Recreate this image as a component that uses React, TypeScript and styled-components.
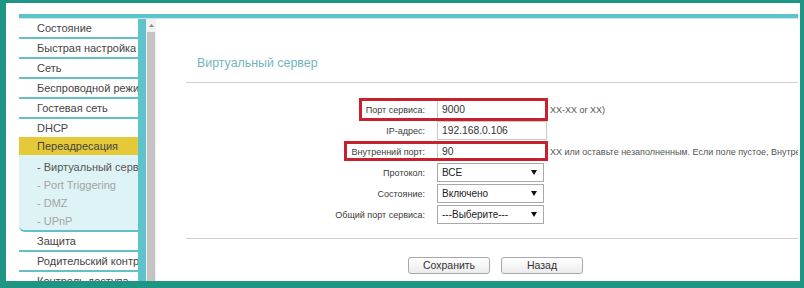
import React from 'react'
import styled, { createGlobalStyle } from 'styled-components'

const GlobalStyle = createGlobalStyle`
  html, body {
    margin: 0;
    padding: 0;
    background: #1f9584;
  }
  body {
    font-family: "Liberation Sans", Arial, sans-serif;
  }
`

type MenuEntry = { label: string; flat?: boolean; active?: boolean }

const topMenu: MenuEntry[] = [
  { label: 'Состояние' },
  { label: 'Быстрая настройка' },
  { label: 'Сеть' },
  { label: 'Беспроводной режим' },
  { label: 'Гостевая сеть' },
  { label: 'DHCP', flat: true },
]

const subMenu = [
  { label: '- Виртуальный сервер', current: true },
  { label: '- Port Triggering' },
  { label: '- DMZ' },
  { label: '- UPnP' },
]

const bottomMenu: MenuEntry[] = [
  { label: 'Защита' },
  { label: 'Родительский контроль' },
  { label: 'Контроль доступа' },
]

const Arrow = () => (
  <svg width="6" height="5" viewBox="0 0 6 5">
    <path d="M0 0h6L3 5z" fill="#111" />
  </svg>
)

export default function App() {
  return (
    <>
      <GlobalStyle />
      <Frame>
        <Window>
          <TopBar />
          <Body>
            <Menu>
              {topMenu.map((m) => (
                <MenuItem key={m.label} $flat={m.flat}>
                  {m.label}
                </MenuItem>
              ))}
              <MenuItem $active $flat>
                Переадресация
              </MenuItem>
              <SubMenu>
                {subMenu.map((s) => (
                  <SubItem key={s.label} $current={s.current}>
                    {s.label}
                  </SubItem>
                ))}
              </SubMenu>
              {bottomMenu.map((m) => (
                <MenuItem key={m.label}>{m.label}</MenuItem>
              ))}
            </Menu>
            <Divider />
            <ScrollBar>
              <ScrollArrow>
                <svg width="5" height="3" viewBox="0 0 5 3">
                  <path d="M0 3h5L2.5 0z" fill="#8a8a8a" />
                </svg>
              </ScrollArrow>
              <ScrollThumb />
            </ScrollBar>
            <Content>
              <Header>
                <Title>Виртуальный сервер</Title>
              </Header>
              <Form>
                <Row>
                  <Label>Порт сервиса:</Label>
                  <Input>9000</Input>
                  <Hint>XX-XX or XX)</Hint>
                  <Mark $left={203} $top={-1} $width={189} $height={23} />
                </Row>
                <Row>
                  <Label>IP-адрес:</Label>
                  <Input>192.168.0.106</Input>
                </Row>
                <Row>
                  <Label>Внутренний порт:</Label>
                  <Input>90</Input>
                  <Hint>XX или оставьте незаполненным. Если поле пустое, Внутренний порт будет таким же, как порт сервиса</Hint>
                  <Mark $left={188} $top={0} $width={204} $height={20} />
                </Row>
                <Row>
                  <Label>Протокол:</Label>
                  <Select>
                    ВСЕ
                    <Arrow />
                  </Select>
                </Row>
                <Row>
                  <Label>Состояние:</Label>
                  <Select>
                    Включено
                    <Arrow />
                  </Select>
                </Row>
                <Row>
                  <Label>Общий порт сервиса:</Label>
                  <Select>
                    ---Выберите---
                    <Arrow />
                  </Select>
                </Row>
              </Form>
              <Footer>
                <Button>Сохранить</Button>
                <Button>Назад</Button>
              </Footer>
            </Content>
          </Body>
        </Window>
      </Frame>
    </>
  )
}

const Frame = styled.div`
  width: 804px;
  height: 288px;
  box-sizing: border-box;
  padding: 3px 4px 7px 6px;
  background: #1f9584;
`

const Window = styled.div`
  height: 100%;
  box-sizing: border-box;
  background: #fff;
  padding: 11px 2px 0 13px;
  display: flex;
  flex-direction: column;
  overflow: hidden;
`

const TopBar = styled.div`
  height: 4px;
  flex-shrink: 0;
  background: #5ec3cb;
  border-bottom: 1px solid #c4ecee;
`

const Body = styled.div`
  flex: 1;
  min-height: 0;
  display: flex;
`

const Menu = styled.div`
  width: 119px;
  flex-shrink: 0;
  overflow: hidden;
  display: flex;
  flex-direction: column;
`

const MenuItem = styled.div<{ $flat?: boolean; $active?: boolean }>`
  flex-shrink: 0;
  height: 18px;
  line-height: 18px;
  padding-left: 18px;
  font-size: 11px;
  color: #444;
  white-space: nowrap;
  background: ${(p) => (p.$active ? '#e6c939' : '#fff')};
  border-bottom: ${(p) => (p.$flat ? 'none' : '2px solid #64c0c4')};
`

const SubMenu = styled.div`
  flex-shrink: 0;
  padding-top: 3px;
  background: #def3f5;
  border-bottom: 2px solid #64c0c4;
  border-bottom-left-radius: 6px;
`

const SubItem = styled.div<{ $current?: boolean }>`
  height: 18px;
  line-height: 18px;
  padding-left: 18px;
  font-size: 11px;
  white-space: nowrap;
  color: ${(p) => (p.$current ? '#555' : '#a3a3a3')};
`

const Divider = styled.div`
  width: 8px;
  flex-shrink: 0;
  background: #5ec3cb;
`

const ScrollBar = styled.div`
  width: 10px;
  flex-shrink: 0;
  display: flex;
  flex-direction: column;
  background: #f1f1f1;
`

const ScrollArrow = styled.div`
  height: 13px;
  display: flex;
  align-items: center;
  justify-content: center;
`

const ScrollThumb = styled.div`
  flex: 1;
  margin: 0 1px;
  background: #c3c3c3;
`

const Content = styled.div`
  flex: 1;
  min-width: 0;
  overflow: hidden;
`

const Header = styled.div`
  margin-left: 30px;
  height: 64px;
  border-bottom: 1px solid #cfcfcf;
  padding: 36px 0 0 11px;
  box-sizing: border-box;
`

const Title = styled.div`
  font-size: 12.4px;
  line-height: 16px;
  color: #74b4c1;
`

const Form = styled.div`
  margin-top: 16px;
  display: flex;
  flex-direction: column;
`

const Row = styled.div`
  position: relative;
  height: 21px;
  display: flex;
  align-items: center;
`

const Label = styled.div`
  width: 269px;
  flex-shrink: 0;
  margin-right: 12px;
  text-align: right;
  font-size: 9px;
  color: #3a3a3a;
`

const Input = styled.div`
  width: 110px;
  height: 19px;
  flex-shrink: 0;
  box-sizing: border-box;
  border: 1px solid #c9c9c9;
  padding-left: 4px;
  font-size: 10.3px;
  line-height: 17px;
  color: #333;
`

const Select = styled.div`
  width: 107px;
  height: 19px;
  flex-shrink: 0;
  box-sizing: border-box;
  border: 1px solid #a9a9a9;
  padding: 0 6px 0 4px;
  display: flex;
  align-items: center;
  justify-content: space-between;
  font-size: 10px;
  color: #222;
`

const Hint = styled.div`
  margin-left: 3px;
  font-size: 9px;
  color: #555;
  white-space: nowrap;
`

const Mark = styled.div<{ $left: number; $top: number; $width: number; $height: number }>`
  position: absolute;
  left: ${(p) => p.$left}px;
  top: ${(p) => p.$top}px;
  width: ${(p) => p.$width}px;
  height: ${(p) => p.$height}px;
  box-sizing: border-box;
  border: 3px solid #c8202e;
  pointer-events: none;
`

const Footer = styled.div`
  margin: 13px 0 0 30px;
  border-top: 1px solid #cfcfcf;
  padding: 18px 0 0 222px;
  display: flex;
  gap: 11px;
`

const Button = styled.div`
  width: 82px;
  height: 17px;
  box-sizing: border-box;
  border: 1px solid #a8a8a8;
  border-radius: 3px;
  background: linear-gradient(#fff, #ececec);
  font-size: 10.5px;
  line-height: 15px;
  text-align: center;
  color: #333;
`
